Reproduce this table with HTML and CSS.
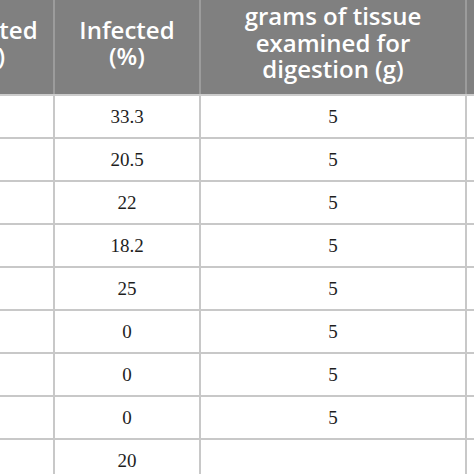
FILE: index.html
```html
<!DOCTYPE html>
<html>
<head>
<meta charset="utf-8">
<link rel="stylesheet" href="styles.css">
</head>
<body>
<div class="frame">
<table class="data">
<colgroup>
<col class="c1"><col class="c2"><col class="c3"><col class="c4">
</colgroup>
<thead>
<tr>
<th>Infected<br>(n)</th>
<th>Infected<br>(%)</th>
<th>grams of tissue<br>examined for<br>digestion (g)</th>
<th></th>
</tr>
</thead>
<tbody>
<tr><td></td><td>33.3</td><td>5</td><td></td></tr>
<tr><td></td><td>20.5</td><td>5</td><td></td></tr>
<tr><td></td><td>22</td><td>5</td><td></td></tr>
<tr><td></td><td>18.2</td><td>5</td><td></td></tr>
<tr><td></td><td>25</td><td>5</td><td></td></tr>
<tr><td></td><td>0</td><td>5</td><td></td></tr>
<tr><td></td><td>0</td><td>5</td><td></td></tr>
<tr><td></td><td>0</td><td>5</td><td></td></tr>
<tr><td></td><td>20</td><td></td><td></td></tr>
</tbody>
</table>
</div>
</body>
</html>
```
FILE: styles.css
```css
html, body {
  margin: 0;
  padding: 0;
  background: #ffffff;
}
.frame {
  width: 474px;
  height: 474px;
  overflow: hidden;
  position: relative;
}
.data {
  border-collapse: collapse;
  table-layout: fixed;
  width: 640px;
  margin-left: -75px;
  margin-top: 0;
}
.c1 { width: 128px; }
.c2 { width: 146px; }
.c3 { width: 266px; }
.c4 { width: 100px; }
.data th {
  background: #808080;
  color: #ffffff;
  font-family: "Open Sans", "DejaVu Sans", sans-serif;
  font-weight: 600;
  font-size: 24px;
  line-height: 26.4px;
  height: 86px;
  padding: 0 0 8px 0;
  vertical-align: middle;
  text-align: center;
  border-left: 2px solid #9c9c9c;
  border-right: 2px solid #9c9c9c;
  border-bottom: 2px solid #cccccc;
  border-top: none;
}
.data td {
  font-family: "Liberation Serif", "Times New Roman", serif;
  font-size: 19px;
  line-height: 22px;
  color: #1e1e1e;
  text-align: center;
  vertical-align: middle;
  height: 40px;
  padding: 1px 0 0 0;
  border: 2px solid #c8c8c8;
}
```
